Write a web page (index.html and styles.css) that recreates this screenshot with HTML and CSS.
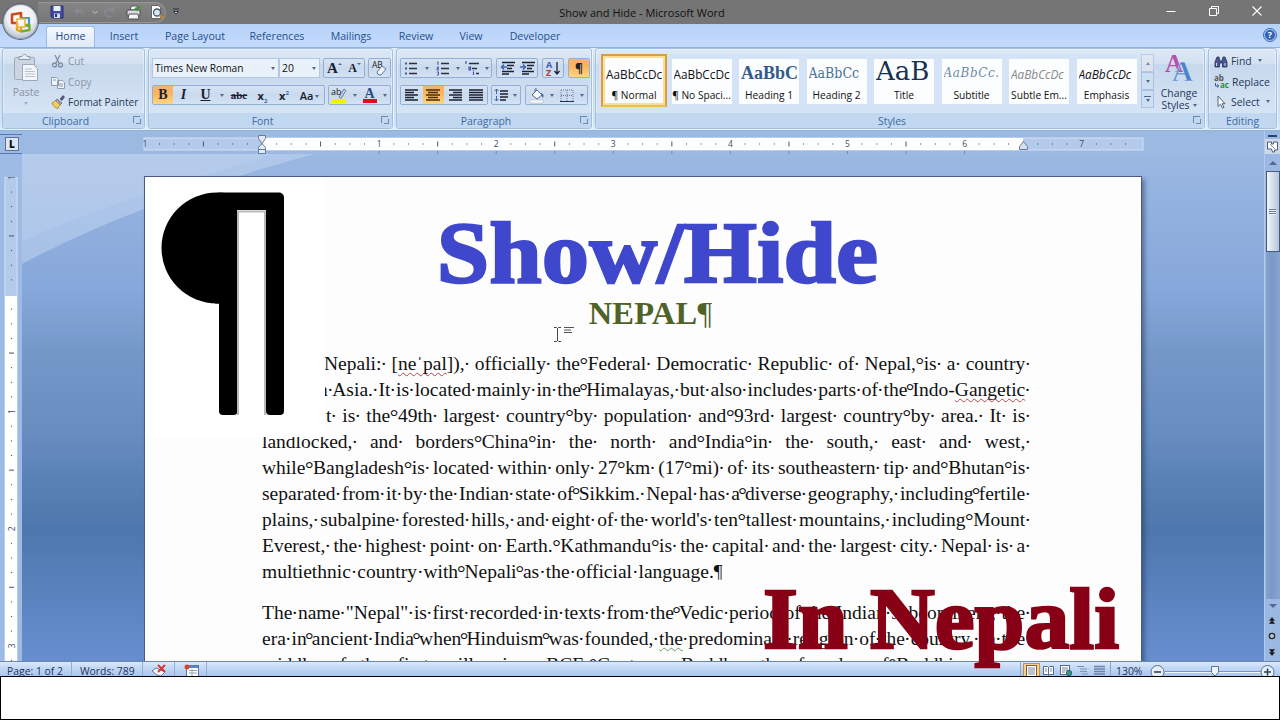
FILE: index.html
```html
<!DOCTYPE html>
<html lang="en">
<head>
    <meta charset="UTF-8">
    <meta name="viewport" content="width=device-width, initial-scale=1.0">
    <title>Show and Hide - Microsoft Word</title>
    <link rel="stylesheet" href="styles.css">
</head>
<body>
    <header class="titlebar">
        <div class="quick-access">
            <svg width="14" height="14" viewBox="0 0 14 14"><path d="M1 1h12v12H2.500L1 11.500z" fill="#3f48a8" stroke="#26306f"/><rect x="3.500" y="1" width="7" height="5" fill="#e9eefb"/><rect x="4" y="8.500" width="6" height="4.500" fill="#cfd7ef"/><rect x="5" y="9" width="2" height="3" fill="#26306f"/></svg>
            <svg class="faded" width="14" height="14" viewBox="0 0 14 14"><path d="M5 2L1 6l4 4V7.500c3-.5 5 .5 6 3 .5-4-2-6.500-6-6z" fill="#8e93a6"/></svg>
            <svg class="tiny" width="6" height="5" viewBox="0 0 6 5"><path d="M.5 1l2.500 2.500L5.500 1" fill="none" stroke="#c6c6c6"/></svg>
            <svg class="faded" width="14" height="14" viewBox="0 0 14 14"><path d="M10 2v4H6M10 6C8 2 2 3 2 8c0 3 4 5 7 3" fill="none" stroke="#8e93a6" stroke-width="2"/></svg>
            <svg width="15" height="15" viewBox="0 0 15 15"><path d="M4 5l1.500-4h6L10 5z" fill="#fff" stroke="#555"/><rect x="1" y="5" width="13" height="6" rx="1" fill="#d8dbe2" stroke="#44474f"/><path d="M3 9h9l1 5H2z" fill="#f4f4f4" stroke="#555"/><path d="M9 3l2 2 3-4" fill="none" stroke="#3b9a35" stroke-width="1.800"/></svg>
            <svg width="14" height="15" viewBox="0 0 14 15"><path d="M1.500.5h7l2 2v11h-9z" fill="#fff" stroke="#666"/><circle cx="7" cy="7.500" r="3.500" fill="#d4e8f8" stroke="#4a5568" stroke-width="1.300"/><path d="M9.500 10l3.500 3.500" stroke="#c28a2b" stroke-width="2.200"/></svg>
        </div>
        <svg class="qat-more" width="8" height="8" viewBox="0 0 8 8"><path d="M1 1h6M1.500 3.500h5L4 6z" fill="#dfe7f3" stroke="#26344c"/></svg>
        <h1 class="window-title">Show and Hide - Microsoft Word</h1>
        <div class="window-buttons">
            <svg width="10" height="10" viewBox="0 0 10 10"><path d="M.5 5.500h9" stroke="#fff"/></svg>
            <svg width="10" height="10" viewBox="0 0 10 10"><path d="M.5 2.500h7v7h-7zM2.500 2.500v-2h7v7h-2" fill="none" stroke="#fff"/></svg>
            <svg width="10" height="10" viewBox="0 0 10 10"><path d="M.5.5l9 9M9.500.5l-9 9" stroke="#fff" stroke-width="1.100"/></svg>
        </div>
    </header>

    <div class="office-button">
        <svg width="24" height="24" viewBox="0 0 24 24" fill="none" stroke-linejoin="round">
            <path d="M8 13H3V4.500L12 3v5" stroke="#cf4a14" stroke-width="2.600"/>
            <path d="M12 8h8v8h-3" stroke="#4f93cf" stroke-width="2.200"/>
            <path d="M8 13v7l4 1.500V17" stroke="#e9a11b" stroke-width="2.400"/>
            <path d="M12 21.500l8.500-1.500v-5H16" stroke="#6fae35" stroke-width="2.400"/>
            <path d="M8 9h8v8H8z" stroke="#f0b42c" stroke-width="1.600"/>
        </svg>
    </div>

    <nav class="tabs">
        <span class="tab active">Home</span>
        <span class="tab">Insert</span>
        <span class="tab">Page Layout</span>
        <span class="tab">References</span>
        <span class="tab">Mailings</span>
        <span class="tab">Review</span>
        <span class="tab">View</span>
        <span class="tab">Developer</span>
        <span class="help">?</span>
    </nav>

    <section class="ribbon">
        <div class="group clipboard">
            <div class="group-body">
                <div class="paste disabled">
                    <svg width="28" height="30" viewBox="0 0 28 30"><rect x="2.500" y="4.500" width="20" height="22" rx="1" fill="#cbd4e0" stroke="#9ba9bc"/><path d="M7 6.500h11v-3h-3C14 .5 11 .5 10 3.500H7z" fill="#e8edf3" stroke="#8b98ab"/><path d="M10.500 11.500h11l4 4v12h-15z" fill="#f3f6fa" stroke="#9ba9bc"/><path d="M13 16h7M13 18.500h10M13 21h10M13 23.500h10" stroke="#b6c1d1"/></svg>
                    <span>Paste</span>
                    <i class="arrow"></i>
                </div>
                <div class="commands">
                    <div class="command disabled"><svg width="14" height="14" viewBox="0 0 14 14" fill="none" stroke="#7f8ea3" stroke-width="1.300"><path d="M4 1l4 8M9 1L5 9"/><circle cx="3.500" cy="11" r="2"/><circle cx="9.500" cy="11" r="2"/></svg>Cut</div>
                    <div class="command disabled"><svg width="14" height="14" viewBox="0 0 14 14" fill="#eef3f9" stroke="#8c9bb1"><path d="M.5 2.500h5l2 2v6h-7zM6.500 5.500h5l2 2v6h-7z"/><path d="M8 9h4M8 11h4M2 5h3"/></svg>Copy</div>
                    <div class="command"><svg width="14" height="14" viewBox="0 0 14 14"><path d="M9 4l3-3.500L13.500 2 11 5.500z" fill="#555d80" stroke="#333a5c" stroke-width=".6"/><path d="M6 4l5 4-2 2-5-4z" fill="#9aa2c5" stroke="#444c70" stroke-width=".6"/><path d="M4.500 5.500L1 8c1 3 3 5 6 5.500L9 9.500z" fill="#f2cd5c" stroke="#9a7521" stroke-width=".7"/></svg>Format Painter</div>
                </div>
            </div>
            <div class="group-label with-launcher">Clipboard<i class="launcher"></i></div>
        </div>

        <div class="group font">
            <div class="group-body rows">
                <div class="row">
                    <div class="combo font-name">Times New Roman<i class="arrow"></i></div>
                    <div class="combo font-size">20<i class="arrow"></i></div>
                    <div class="buttons grow-shrink">
                        <span class="serif big">A<i class="arrow up"></i></span>
                        <span class="serif small">A<i class="arrow"></i></span>
                    </div>
                    <div class="buttons clear"><svg width="17" height="16" viewBox="0 0 17 16"><text x="1" y="8" font-size="8.500" font-family="Open Sans, sans-serif" fill="#222">AB</text><path d="M6 12l5-6 4 3-5 6-3-.5z" fill="#eef2fb" stroke="#68789a"/></svg></div>
                </div>
                <div class="row">
                    <div class="buttons character">
                        <b class="serif on">B</b>
                        <em class="serif">I</em>
                        <u class="serif">U</u>
                        <i class="arrow"></i>
                        <s class="serif">abc</s>
                        <b>x<sub>2</sub></b>
                        <b>x<sup>2</sup></b>
                        <span class="case">Aa<i class="arrow"></i></span>
                    </div>
                    <div class="buttons colours">
                        <svg width="18" height="17" viewBox="0 0 18 17"><text x="1" y="8" font-size="9" font-family="Open Sans, sans-serif" fill="#222">ab</text><path d="M9 10l5-8 2 1.500-5 8z" fill="#c6d3ec" stroke="#4f628a" stroke-width=".8"/><rect x="2" y="12" width="14" height="4" fill="#f6f000"/></svg>
                        <i class="arrow"></i>
                        <svg width="18" height="17" viewBox="0 0 18 17"><text x="3.500" y="11" font-size="14" font-weight="bold" font-family="Liberation Serif, serif" fill="#2f4c86">A</text><rect x="2" y="12" width="14" height="4" fill="#d8121b"/></svg>
                        <i class="arrow"></i>
                    </div>
                </div>
            </div>
            <div class="group-label with-launcher">Font<i class="launcher"></i></div>
        </div>

        <div class="group paragraph">
            <div class="group-body rows">
                <div class="row">
                    <div class="buttons lists">
                        <svg width="14" height="14" viewBox="0 0 14 14"><path d="M5 2.500h8M5 7.500h8M5 12.500h8" stroke="#2a2f3c" stroke-width="1.300"/><path d="M1 1.500h2v2H1zM1 6.500h2v2H1zM1 11.500h2v2H1z" fill="#4057a5"/></svg>
                        <i class="arrow"></i>
                        <svg width="14" height="14" viewBox="0 0 14 14"><path d="M5 2.500h8M5 7.500h8M5 12.500h8" stroke="#2a2f3c" stroke-width="1.300"/><path d="M1 1h1v3M.8 6h1.700v1.500H1V9h2M.8 11h1.700v3H.8" fill="none" stroke="#4057a5"/></svg>
                        <i class="arrow"></i>
                        <svg width="15" height="14" viewBox="0 0 15 14"><path d="M4 2.500h10M7 7.500h5M11 12.500h3" stroke="#2a2f3c" stroke-width="1.300"/><path d="M1 0v3M4 6h1.500v3H4zM8.500 9.500v1M8.500 11v3" fill="none" stroke="#4057a5" stroke-width="1.200"/></svg>
                        <i class="arrow"></i>
                    </div>
                    <div class="buttons indents">
                        <svg width="15" height="14" viewBox="0 0 15 14"><path d="M2 1.500h13M7 4.500h7M7 7.500h5M2 10.500h12M2 13h7" stroke="#1c2130" stroke-width="1.500"/><path d="M7 6H2M4 3.500L1.500 6 4 8.500" stroke="#4361b0" stroke-width="1.500" fill="none"/></svg>
                        <svg width="15" height="14" viewBox="0 0 15 14"><path d="M2 1.500h13M7 4.500h7M7 7.500h5M2 10.500h12M2 13h7" stroke="#1c2130" stroke-width="1.500"/><path d="M0 6h5M3 3.500L5.500 6 3 8.500" stroke="#4361b0" stroke-width="1.500" fill="none"/></svg>
                    </div>
                    <div class="buttons sort"><svg width="16" height="17" viewBox="0 0 16 17"><text x="1" y="8" font-size="9" font-weight="bold" font-family="Open Sans, sans-serif" fill="#3a5fae">A</text><text x="1" y="16" font-size="9" font-weight="bold" font-family="Open Sans, sans-serif" fill="#b5382c">Z</text><path d="M12 2v11M9.500 11l2.500 3 2.500-3" fill="none" stroke="#1c2130" stroke-width="1.300"/></svg></div>
                    <div class="buttons pilcrow"><b class="on">¶</b></div>
                </div>
                <div class="row">
                    <div class="buttons aligns">
                        <svg width="14" height="12" viewBox="0 0 14 12"><path d="M0 1h13M0 3.500h9M0 6h13M0 8.500h9M0 11h13" stroke="#1c2130" stroke-width="1.400"/></svg>
                        <span class="on"><svg width="14" height="12" viewBox="0 0 14 12"><path d="M0 1h14M2 3.500h10M0 6h14M2 8.500h10M0 11h14" stroke="#4a2c05" stroke-width="1.400"/></svg></span>
                        <svg width="14" height="12" viewBox="0 0 14 12"><path d="M1 1h13M5 3.500h9M1 6h13M5 8.500h9M1 11h13" stroke="#1c2130" stroke-width="1.400"/></svg>
                        <svg width="14" height="12" viewBox="0 0 14 12"><path d="M0 1h14M0 3.500h14M0 6h14M0 8.500h14M0 11h14" stroke="#1c2130" stroke-width="1.400"/></svg>
                    </div>
                    <div class="buttons spacing">
                        <svg width="14" height="14" viewBox="0 0 14 14"><path d="M6 3h8M6 6h8M6 9h8M6 12h6" stroke="#1c2130" stroke-width="1.400"/><path d="M2.500 1v5M.5 3l2-2 2 2M2.500 8v5M.5 11l2 2 2-2" stroke="#4361b0" fill="none"/></svg>
                        <i class="arrow"></i>
                    </div>
                    <div class="buttons fills">
                        <svg width="16" height="15" viewBox="0 0 16 15"><path d="M3 7l5-5 5 5-5 4z" fill="#f5f8fc" stroke="#5b6b88"/><path d="M6 4V1h2" stroke="#5b6b88" fill="none"/><path d="M12 5c3 1 3 3 2 5l-2-3z" fill="#3d6bb5"/><rect x="1" y="12" width="13" height="3" fill="#fff" stroke="#a9b3c4" stroke-width=".6"/></svg>
                        <i class="arrow"></i>
                        <svg width="14" height="13" viewBox="0 0 14 13"><path d="M1 1h12M1 6.500h12M1 1v11M7 1v11M13 1v11" stroke="#68789a" stroke-dasharray="1 1"/><path d="M0 12.500h14" stroke="#26304a"/></svg>
                        <i class="arrow"></i>
                    </div>
                </div>
            </div>
            <div class="group-label with-launcher">Paragraph<i class="launcher"></i></div>
        </div>

        <div class="group styles">
            <div class="group-body">
                <div class="gallery">
                    <div class="style selected"><span class="sample">AaBbCcDc</span><span class="name">¶ Normal</span></div>
                    <div class="style"><span class="sample">AaBbCcDc</span><span class="name">¶ No Spaci...</span></div>
                    <div class="style heading1"><span class="sample">AaBbCc</span><span class="name">Heading 1</span></div>
                    <div class="style heading2"><span class="sample">AaBbCc</span><span class="name">Heading 2</span></div>
                    <div class="style title"><span class="sample">AaB</span><span class="name">Title</span></div>
                    <div class="style subtitle"><span class="sample">AaBbCc.</span><span class="name">Subtitle</span></div>
                    <div class="style subtle"><span class="sample">AaBbCcDc</span><span class="name">Subtle Em...</span></div>
                    <div class="style emphasis"><span class="sample">AaBbCcDc</span><span class="name">Emphasis</span></div>
                </div>
                <div class="gallery-scroll">
                    <span class="off"><i class="arrow up"></i></span>
                    <span><i class="arrow"></i></span>
                    <span class="more"><i class="arrow"></i></span>
                </div>
                <div class="change-styles">
                    <svg width="28" height="28" viewBox="0 0 28 28" font-family="Liberation Serif, serif" font-weight="bold"><text x="0" y="18" font-size="25" fill="#b451b0">A</text><text x="7" y="27" font-size="29" fill="#4d82c8" stroke="#d7e6fa" stroke-width=".4">A</text></svg>
                    <span>Change</span>
                    <span>Styles<i class="arrow"></i></span>
                </div>
            </div>
            <div class="group-label with-launcher">Styles<i class="launcher"></i></div>
        </div>

        <div class="group editing">
            <div class="group-body">
                <div class="commands">
                    <div class="command"><svg width="14" height="13" viewBox="0 0 14 13"><path d="M1 12V7l2-5h2l1 4h2l1-4h2l2 5v5H8.500V8h-3v4z" fill="#46598a" stroke="#22315c" stroke-width=".8"/><path d="M2.500 8v3M11 8v3" stroke="#c9d6f0"/></svg>Find<i class="arrow"></i></div>
                    <div class="command"><svg width="15" height="14" viewBox="0 0 15 14" font-family="Open Sans, sans-serif" font-size="8" font-weight="bold"><text x="0" y="6" fill="#555">ab</text><text x="6" y="13" fill="#2c8d3a">ac</text><path d="M1.500 8v3h3M3 9.500L4.800 11 3 12.500" fill="none" stroke="#3458a8"/></svg>Replace</div>
                    <div class="command"><svg width="14" height="14" viewBox="0 0 14 14"><path d="M4 1v10.500l2.500-2.300 2 4 1.500-.8-1.900-3.700H11z" fill="#fff" stroke="#56657f"/></svg>Select<i class="arrow"></i></div>
                </div>
            </div>
            <div class="group-label">Editing</div>
        </div>
    </section>

    <main class="workspace">
        <aside class="left-rail">
            <div class="tab-stop"><span>L</span></div>
            <svg class="v-ruler" id="vRuler" width="22" height="484" viewBox="0 177 22 484"></svg>
        </aside>

        <div class="canvas">
            <svg class="swoosh" width="300" height="120" viewBox="0 0 300 120" preserveAspectRatio="none"><path d="M0 0h292C190 28 90 62 0 110z" fill="#c9dcf5" opacity=".45"/><path d="M0 0h250C160 30 80 50 0 88z" fill="#d4e2f7" opacity=".15"/></svg>
            <svg class="h-ruler" id="hRuler" width="1242" height="23" viewBox="22 131 1242 23"></svg>
            <article class="page">
                <h2 class="doc-title">NEPAL<span>¶</span></h2>
                <div class="paragraph-text">
                    <p class="line from-image">Nepali: [<span class="misspelled">neˈpal</span>]), officially the°Federal Democratic Republic of Nepal,°is a country </p>
                    <p class="line tight from-image second">n Asia. It is located mainly in the°Himalayas, but also includes parts of the°Indo-<span class="misspelled">Gangetic</span> </p>
                    <p class="line from-image third">t is the°49th largest country°by population and°93rd largest country°by area. It is </p>
                    <p class="line">landlocked, and borders°China°in the north and°India°in the south, east and west, </p>
                    <p class="line">while°Bangladesh°is located within only 27°km (17°mi) of its southeastern tip and°Bhutan°is </p>
                    <p class="line tight">separated from it by the Indian state of°Sikkim. Nepal has a°diverse geography, including°fertile </p>
                    <p class="line">plains, subalpine forested hills, and eight of the world's ten°tallest mountains, including°Mount </p>
                    <p class="line">Everest, the highest point on Earth.°Kathmandu°is the capital and the largest city. Nepal is a </p>
                    <p class="line last">multiethnic country with°Nepali°as the official language.¶</p>
                </div>
                <div class="paragraph-text">
                    <p class="line tight">The name "Nepal" is first recorded in texts from the°Vedic period of the Indian subcontinent, the </p>
                    <p class="line tight">era in°ancient India°when°Hinduism°was founded, <span class="misspelled grammar">the</span> predominant religion of the country. In the </p>
                    <p class="line">middle of the first millennium BCE,°Gautama Buddha, the founder of°Buddhism, was </p>
                </div>
                <div class="pilcrow-image">
                    <svg width="180" height="260" viewBox="145 177 180 260">
                        <circle cx="217" cy="248" r="55.500"/>
                        <rect x="215" y="192.500" width="69" height="30" rx="5"/>
                        <rect x="215" y="200" width="22" height="103.500"/>
                        <rect x="219" y="290" width="18.500" height="125" rx="4"/>
                        <rect x="266" y="205" width="18" height="210" rx="4"/>
                        <rect class="slot" x="237" y="210" width="29" height="206"/>
                        <path class="slot-edge" d="M238 415V211.500h27V415"/>
                    </svg>
                </div>
                <div class="caption show-hide">Show/Hide</div>
                <svg class="cursor" width="22" height="18" viewBox="0 0 22 18"><path d="M1 1.500h2.500l1 1 1-1H8M4.500 2v13M1 15.500h2.500l1-1 1 1H8" fill="none" stroke="#444"/><path d="M11 1.500h10M11 4h7M11 6.500h8" stroke="#555"/></svg>
            </article>
        </div>

        <aside class="right-rail">
            <i class="split"></i>
            <svg class="ruler-toggle" width="15" height="15" viewBox="0 0 15 15"><path d="M2.500 3h4v2h2V3h4v8h-3v2h-2l-1-3h-4z" fill="#fff" stroke="#4d5d7c"/><path d="M5 5l6 6" stroke="#8793ab"/></svg>
            <div class="scroll-button"><i class="arrow up"></i></div>
            <div class="track"><div class="thumb"><i></i></div></div>
            <div class="scroll-button down"><i class="arrow"></i></div>
            <svg class="browse" width="15" height="48" viewBox="0 0 15 48"><path d="M4.500 7.500L7 4.500l2.500 3zM4.500 10.500L7 7.500l2.500 3z" fill="#111" stroke="#111" stroke-width=".5"/><circle cx="7" cy="23" r="2.700" fill="#b7c4da" stroke="#222" stroke-width="1.200"/><path d="M4.500 36.500h5L7 39.500zM4.500 39.500h5L7 42.500z" fill="#111" stroke="#111" stroke-width=".5"/></svg>
        </aside>
        <div class="caption in-nepali">In Nepali</div>
    </main>

    <footer class="statusbar">
        <span class="cell pages">Page: 1 of 2</span>
        <span class="cell words">Words: 789</span>
        <span class="cell proof"><svg width="16" height="13" viewBox="0 0 16 13"><path d="M1 7l4-3 9 4-4 4-4-1z" fill="#f5f7fb" stroke="#6a7ca0"/><path d="M7 1l7 7M14 1L7 8" stroke="#d8352c" stroke-width="1.800"/></svg></span>
        <span class="cell macro"><svg width="15" height="13" viewBox="0 0 15 13"><rect x="2.500" y="1.500" width="12" height="11" fill="#fff" stroke="#5a76a8"/><path d="M3 3h11" stroke="#5a86c8" stroke-width="2"/><path d="M5 6.500h8M5 9h8M8 5v7" stroke="#8aa2c9"/><circle cx="3" cy="3" r="2.500" fill="#d8432e"/></svg></span>
        <div class="views">
            <span class="on"><svg width="11" height="11" viewBox="0 0 11 11"><rect x=".5" y=".5" width="10" height="11" fill="#fff" stroke="#6a6250"/><path d="M2 3h7M2 5h7M2 7h7M2 9h7" stroke="#7c8698"/></svg></span>
            <span><svg width="11" height="11" viewBox="0 0 11 11"><path d="M.5 1.500h4l1 1 1-1h4v8h-4l-1 1-1-1h-4zM5.500 2v8" fill="#fff" stroke="#56688c"/><path d="M2 4h2M2 6h2M7 4h2M7 6h2" stroke="#7c8698"/></svg></span>
            <span><svg width="12" height="11" viewBox="0 0 12 11"><rect x=".5" y=".5" width="9" height="9" fill="#fff" stroke="#56688c"/><path d="M2 3h6M2 5h6M2 7h3" stroke="#7c8698"/><circle cx="9" cy="8" r="2.700" fill="#3c9a72" stroke="#2b5f98"/></svg></span>
            <span><svg width="11" height="11" viewBox="0 0 11 11"><path d="M0 1.500h7M3 4h7M3 6.500h7M5 9h6" stroke="#7b93b8" stroke-width="1.200"/></svg></span>
            <span><svg width="11" height="11" viewBox="0 0 11 11"><path d="M0 1.500h11M0 4h11M0 6.500h11M0 9h11" stroke="#6d82a6" stroke-width="1.300"/></svg></span>
        </div>
        <span class="zoom">130%</span>
        <svg class="zoom-slider" width="128" height="15" viewBox="1150 661 128 15"><path d="M1165 670.500h96" stroke="#7a95bf"/><path d="M1165 671.500h96" stroke="#eef5ff"/><circle cx="1157.500" cy="671" r="6.500" fill="#e6effb" stroke="#5d7394"/><path d="M1154 671h7" stroke="#33425e" stroke-width="1.600"/><path d="M1211.500 665.500h7v6l-3.500 3.500-3.500-3.500z" fill="#eaf2fc" stroke="#5d7394"/><circle cx="1267.500" cy="671" r="6.500" fill="#e6effb" stroke="#5d7394"/><path d="M1264 671h7M1267.500 667.500v7" stroke="#33425e" stroke-width="1.600"/></svg>
    </footer>
    <div class="bottom-band"></div>

    <script src="script.js"></script>
</body>
</html>
```
FILE: styles.css
```css
* {
    box-sizing: border-box;
}

body {
    margin: 0;
    width: 1280px;
    height: 720px;
    overflow: hidden;
    display: flex;
    flex-direction: column;
    position: relative;
    font-family: "Open Sans", "Noto Sans", sans-serif;
    font-size: 10.4px;
    color: #1e395b;
    background: #fff;
}

svg {
    display: block;
    flex: none;
    overflow: visible;
}

.serif {
    font-family: "Liberation Serif", serif;
}

.arrow {
    display: inline-block;
    border: 2.5px solid transparent;
    border-top: 3px solid #52688e;
    border-bottom: 0;
}

.arrow.up {
    border-top: 0;
    border-bottom: 3px solid #52688e;
}

/* title bar */
.titlebar {
    height: 24px;
    flex: none;
    display: grid;
    grid-template-columns: 128px 22px 1fr 110px;
    align-items: center;
    background: #757575;
    padding-left: 38px;
}

.quick-access {
    height: 21px;
    display: flex;
    align-items: center;
    gap: 9px;
    padding-left: 12px;
    border: 1px solid #969696;
    border-left: 0;
    border-radius: 0 11px 11px 0;
    background: linear-gradient(#858585, #777);
}

.quick-access .tiny {
    margin: 0 -4px;
}

.faded {
    opacity: .5;
}

.qat-more {
    margin-left: 6px;
}

.window-title {
    margin: 0;
    padding-right: 74px;
    text-align: center;
    font-size: 11px;
    font-weight: 400;
    color: #111;
}

.window-buttons {
    display: flex;
    gap: 33px;
    padding-bottom: 2px;
    margin-left: -4px;
}

.office-button {
    position: absolute;
    left: 3px;
    top: 4px;
    width: 35px;
    height: 35px;
    display: flex;
    align-items: center;
    justify-content: center;
    border-radius: 50%;
    border: 1px solid #8d97a8;
    background: radial-gradient(circle at 50% 35%, #fff 0%, #eceff4 50%, #b9c2d0 80%, #f4f7fb 100%);
    box-shadow: 0 0 0 1px #5f6670;
}

/* tabs */
.tabs {
    height: 23px;
    flex: none;
    display: grid;
    grid-template-columns: 49px 58px 84px 80px 68px 62px 48px 80px 1fr;
    padding: 2px 4px 0 46px;
    background: linear-gradient(#b7d2f8, #c3dbfd);
    color: #27508c;
    font-size: 10.6px;
}

.tab {
    text-align: center;
    line-height: 21px;
}

.tab.active {
    border: 1px solid #9cbbe6;
    border-bottom: 0;
    border-radius: 3px 3px 0 0;
    line-height: 19px;
    color: #1e4680;
    background: linear-gradient(#f4f9ff, #dfeaf8);
}

.help {
    justify-self: end;
    width: 12px;
    height: 12px;
    margin-top: 3px;
    border-radius: 50%;
    border: 1px solid #a9c8ef;
    outline: 1px solid #3f68b0;
    background: #3163b6;
    color: #fff;
    font-size: 9px;
    font-weight: 700;
    line-height: 10px;
    text-align: center;
}

/* ribbon */
.ribbon {
    height: 84px;
    flex: none;
    display: grid;
    grid-template-columns: 143px 245px 196px 610px 69px;
    gap: 3px;
    padding: 0 0 2px 2px;
    border-top: 1px solid #8fb2e0;
    border-bottom: 1px solid #8fb4d8;
    background: linear-gradient(#e3eefa, #c9dcf3 20%, #cfe3f6 90%, #d2f0fb);
}

.group {
    display: flex;
    flex-direction: column;
    min-width: 0;
    border: 1px solid #a5bfdf;
    border-radius: 3px;
    box-shadow: inset 0 0 0 1px rgba(255, 255, 255, .35), 1px 1px 0 #e8f3fd;
    background: linear-gradient(#dde8f5, #d4e1f1 18%, #c7d8ec 20%, #dae8f7);
}

.group-body {
    height: 64px;
    display: flex;
}

.group-body.rows {
    flex-direction: column;
    gap: 7px;
    padding: 9px 0 0 3px;
}

.group-label {
    flex: 1;
    display: flex;
    justify-content: center;
    align-items: center;
    position: relative;
    padding-top: 1px;
    border-radius: 0 0 2px 2px;
    background: #c2d8f1;
    color: #3d69a6;
}

.group-label.with-launcher {
    padding-right: 16px;
}

.launcher {
    position: absolute;
    right: 4px;
    top: 3px;
    width: 7px;
    height: 7px;
    border-left: 1px solid #6f88b0;
    border-top: 1px solid #6f88b0;
}

.launcher::after {
    content: "";
    position: absolute;
    left: 2px;
    top: 2px;
    width: 4px;
    height: 4px;
    border-right: 1.5px solid #6f88b0;
    border-bottom: 1.5px solid #6f88b0;
}

.disabled {
    color: #8b94a3;
}

.paste {
    width: 46px;
    display: flex;
    flex-direction: column;
    align-items: center;
    padding-top: 4px;
    line-height: 19px;
}

.paste .arrow {
    opacity: .4;
}

.commands {
    display: flex;
    flex-direction: column;
    padding: 2px 0 0 2px;
}

.command {
    display: flex;
    align-items: center;
    gap: 3px;
    height: 20.5px;
    white-space: nowrap;
}

.clipboard .command {
    font-size: 10.1px;
}

.row {
    display: flex;
    gap: 3px;
    height: 20px;
}

.combo {
    display: flex;
    align-items: center;
    justify-content: space-between;
    border: 1px solid #b2c8e6;
    padding: 0 3px 0 2px;
    background: #e9f1fb;
    color: #111;
    white-space: nowrap;
}

.font-name {
    width: 127px;
    font-size: 10.2px;
}

.font-size {
    width: 41px;
    margin-left: -3px;
}

.buttons {
    display: grid;
    align-items: center;
    justify-items: center;
    border: 1px solid #93afd6;
    border-radius: 2px;
    background: linear-gradient(#d6e3f3, #c9daee 50%, #d3e2f4);
    color: #1c2130;
}

.buttons .on {
    align-self: stretch;
    justify-self: stretch;
    display: flex;
    align-items: center;
    justify-content: center;
    background: linear-gradient(#f4b471, #fbb45c 40%, #fdd67f);
}

.grow-shrink { width: 42px; grid-template-columns: 21px 19px; }
.clear { width: 23px; }
.character { width: 173px; grid-template-columns: 20px 21px 23px 9px 26px 21px 22px 29px; font-size: 11px; }
.colours { width: 63px; grid-template-columns: 20px 11px 20px 10px; }
.lists { width: 92px; grid-template-columns: 20px 11px 21px 10px 19px 9px; margin-right: 1px; }
.indents { width: 42px; grid-template-columns: 20px 20px; margin-right: 1px; }
.sort { width: 22px; margin-right: 1px; }
.pilcrow { width: 22px; }
.aligns { width: 88px; grid-template-columns: repeat(4, 21.5px); }
.spacing { width: 30px; grid-template-columns: 18px 9px; }
.fills { width: 63px; grid-template-columns: 21px 10px 20px 10px; margin-left: 1px; }

.grow-shrink span {
    display: flex;
    align-items: flex-start;
    font-weight: 700;
    line-height: 18px;
}

.grow-shrink .arrow {
    margin-top: 4px;
    border-width: 0 2px 2.5px;
}

.grow-shrink .small .arrow {
    border-width: 2.5px 2px 0;
}

.grow-shrink .big { font-size: 15px; }
.grow-shrink .small { font-size: 12px; }

.character b.serif,
.character em,
.character u {
    font-size: 14px;
    font-weight: 700;
}

.character s {
    font-weight: 700;
}

.character sub,
.character sup {
    font-size: 6px;
    line-height: 0;
    color: #3a5fae;
}

.case {
    font-weight: 600;
    white-space: nowrap;
}

.case .arrow {
    margin: 0 0 2px 2px;
}

.pilcrow b {
    font-size: 12px;
}

/* styles gallery */
.gallery {
    display: grid;
    grid-template-columns: repeat(8, 67.5px);
    align-items: start;
    margin: 5px 0 3px 3px;
    padding-left: 2px;
    background: #d4e4f6;
}

.style {
    width: 66px;
    height: 53px;
    border: 3px solid transparent;
    border-top-width: 5px;
    display: flex;
    flex-direction: column;
    align-items: center;
    background: #fcfdff;
    background-clip: padding-box;
    color: #111;
    overflow: hidden;
    white-space: nowrap;
}

.style.selected {
    border: 2px solid #dd9a3f;
    border-bottom-color: #e9c04b;
    box-shadow: inset 0 0 0 2px #fbdf94;
    padding-top: 3px;
}

.sample {
    height: 29px;
    line-height: 30px;
    width: 56px;
    overflow: hidden;
    font-size: 11.8px;
}

.name {
    line-height: 15px;
    font-size: 10.2px;
}

.heading1 .sample {
    font: 700 18px/29px "Liberation Serif", serif;
    color: #345a8a;
}

.heading2 .sample {
    font: 14px/29px "DejaVu Serif", serif;
    font-stretch: condensed;
    color: #4d7393;
}

.title .sample {
    font: 26px/25px "DejaVu Serif", serif;
    color: #17304f;
}

.subtitle .sample {
    font: italic 12px/29px "DejaVu Serif", serif;
    letter-spacing: .6px;
    color: #6d8ba5;
}

.subtle .sample {
    font-style: italic;
    color: #8a8a8a;
}

.emphasis .sample {
    font-style: italic;
}

.gallery-scroll {
    display: grid;
    grid-template-rows: repeat(3, 18px);
    width: 13px;
    margin-top: 5px;
}

.gallery-scroll span {
    display: flex;
    flex-direction: column;
    align-items: center;
    justify-content: center;
    border: 1px solid #a9c2e4;
    background: #cfdff2;
}

.gallery-scroll .off {
    background: #e5e8ee;
    opacity: .7;
}

.gallery-scroll .more::before {
    content: "";
    width: 7px;
    height: 1px;
    margin-bottom: 2px;
    background: #52688e;
}

.change-styles {
    width: 50px;
    display: flex;
    flex-direction: column;
    align-items: center;
    padding-top: 5px;
    line-height: 12px;
    white-space: nowrap;
}

.change-styles svg {
    margin-bottom: 5px;
}

.change-styles .arrow,
.editing .arrow {
    margin: 0 0 2px 3px;
}

.editing .commands {
    padding-left: 5px;
}

/* workspace */
.workspace {
    flex: 1;
    display: grid;
    grid-template-columns: 22px 1fr 16px;
    position: relative;
    min-height: 0;
    background: linear-gradient(#9ebbe3 0, #96b4e0 10%, #86a7da 30%, #7398c8 42%, #688dc1 56%, #4e77ad 75%, #5a82bd 87%, #678fd0 100%);
}

.left-rail {
    background: #9dbbe4;
}

.tab-stop {
    width: 23px;
    height: 20px;
    margin-top: 3px;
    padding: 2px 0 0 5px;
    border: 1px solid #5577b4;
    border-left: 0;
}

.tab-stop span {
    display: block;
    width: 14px;
    height: 14px;
    border: 1px solid #5c6f94;
    background: #dbe7f6;
    font-size: 10px;
    font-weight: 800;
    line-height: 12px;
    text-align: center;
    color: #111;
}

.v-ruler {
    margin-top: 23px;
    overflow: hidden;
}

.canvas {
    position: relative;
    overflow: hidden;
}

.swoosh {
    position: absolute;
    left: 0;
    top: 23px;
}

.h-ruler {
    background: #9cb9e2;
}

.ruler-number {
    font-family: "Open Sans", sans-serif;
    font-size: 8.5px;
    fill: #3b4a66;
    text-anchor: middle;
}

.page {
    position: relative;
    width: 998px;
    height: 600px;
    margin: 22px 0 0 122px;
    padding: 0 112px 0 117px;
    border: 1px solid #4a5c80;
    box-shadow: 3px 3px 4px rgba(30, 50, 90, .45);
    background: #fdfdfd;
    font-family: "Liberation Serif", serif;
    color: #111;
}

.doc-title {
    margin: 116px 0 0 10px;
    height: 58px;
    line-height: 40px;
    text-align: center;
    font-size: 32.5px;
    letter-spacing: .2px;
    color: #4f6228;
}

.doc-title span {
    font-weight: 400;
}

.paragraph-text {
    font-size: 19.5px;
    line-height: 25.93px;
    margin-bottom: 15.5px;
}

.line {
    margin: 0;
    width: 768px;
    white-space: nowrap;
    text-align: justify;
    text-align-last: justify;
    word-spacing: -.25em;
}

.line.from-image {
    width: 706px;
    margin-left: 62px;
}

.line.second {
    width: 712px;
    margin-left: 56px;
}

.line.third {
    width: 704px;
    margin-left: 64px;
}

.line.last {
    text-align-last: left;
}

.dot {
    font-style: normal;
    margin: 0 -.045em;
}

.nbsp {
    font-style: normal;
    font-size: 1.1em;
    line-height: 0;
    vertical-align: -2px;
    margin: 0 -.02em;
}

.tight .nbsp {
    margin: 0 -.08em;
}

.last .nbsp {
    margin: 0 -.05em;
}

.last .dot {
    margin: 0;
}

.misspelled {
    text-decoration: underline wavy #b5464f 1px;
    text-underline-offset: 2px;
    text-decoration-skip-ink: none;
}

.misspelled.grammar {
    text-decoration-color: #6d9a6d;
}

.pilcrow-image {
    position: absolute;
    left: 0;
    top: 0;
    background: #fff;
}

.slot {
    fill: #fff;
}

.slot-edge {
    fill: none;
    stroke: #b9b9b9;
    stroke-width: 2;
}

.cursor {
    position: absolute;
    left: 408px;
    top: 149px;
}

.caption {
    position: absolute;
    white-space: nowrap;
    font-family: "Liberation Serif", serif;
    font-size: 87px;
    font-weight: 700;
    line-height: 1;
    -webkit-text-stroke: 2.5px currentColor;
    transform-origin: 0 0;
}

.show-hide {
    left: 292px;
    top: 32px;
    letter-spacing: .5px;
    transform: scaleX(1.075);
    color: #3f48cc;
}

.in-nepali {
    left: 763px;
    top: 444px;
    transform: scaleX(1.03);
    color: #880015;
    z-index: 2;
}

/* scroll bar */
.right-rail {
    display: flex;
    flex-direction: column;
    align-items: center;
    background: #9bb8e2;
    border-left: 1px solid #b4cbec;
}

.split {
    width: 9px;
    height: 2px;
    margin: 4px 0 2px;
    background: #2b4270;
}

.ruler-toggle {
    background: #cdd9e9;
}

.scroll-button {
    height: 17px;
    display: flex;
    align-items: center;
}

.scroll-button.down {
    height: 14px;
}

.scroll-button .arrow {
    border-width: 4px;
    border-top-width: 0;
}

.scroll-button.down .arrow {
    border-top-width: 4px;
    border-bottom-width: 0;
}

.track {
    flex: 1;
    width: 14px;
    background: linear-gradient(90deg, #86a3cf, #7898c8 40%, #87a5d2);
}

.thumb {
    height: 81px;
    border: 1px solid #44597f;
    display: flex;
    align-items: center;
    justify-content: center;
    background: linear-gradient(90deg, #f2f6fb, #d8e2ee 40%, #b6c6da);
}

.thumb i {
    width: 7px;
    height: 6px;
    background: repeating-linear-gradient(#6b7d9b 0 1px, #eef3f9 1px 2px);
}

/* status bar */
.statusbar {
    height: 15px;
    flex: none;
    display: flex;
    position: relative;
    overflow: hidden;
    border-top: 1px solid #6a87b4;
    background: linear-gradient(#dbe9fb, #c4d9f5 40%, #a9c6ef);
    line-height: 18px;
    padding-left: 7px;
    color: #1d3460;
}

.cell {
    border-right: 1px solid #92afd8;
    white-space: nowrap;
}

.pages { width: 65px; }
.words { width: 71px; padding-left: 8px; }
.proof { width: 32px; padding: 2px 0 0 8px; }
.macro { width: 32px; padding: 2px 0 0 9px; }

.views {
    display: grid;
    grid-template-columns: repeat(5, 17px);
    width: 91px;
    margin-left: 813px;
    padding: 1px 2px;
    border-left: 1px solid #86a4d0;
    border-right: 1px solid #86a4d0;
}

.views span {
    padding: 2px 0 0 3px;
}

.views .on {
    background: #fbd084;
    border: 1px solid #c2904a;
    padding: 1px 0 0 2px;
}

.zoom {
    width: 34px;
    margin-left: 5px;
}

.bottom-band {
    height: 44px;
    flex: none;
    border: 1px solid #000;
    background: #fff;
}
```
FILE: script.js
```js
const INCH = 117.1;

// ruler ticks: a number every inch, a bar every half inch, dots in between
function tick(n, pos, vertical) {
    const at = (x, y) => vertical ? [y, x] : [x, y];
    if (n % 8 === 0) {
        const label = Math.abs(n / 8);
        if (label === 0) return '';
        const spot = vertical
            ? `transform="translate(14.500 ${pos}) rotate(-90)"`
            : `x="${pos}" y="147"`;
        return `<text class="ruler-number" ${spot}>${label}</text>`;
    }
    const mid = vertical ? 11.5 : 144;
    const half = n % 4 === 0 ? 2.5 : 0.6;
    const [x1, y1] = at(pos, mid - half);
    const [x2, y2] = at(pos, mid + half);
    return `<path d="M${x1} ${y1}L${x2} ${y2}" stroke="#44546f"/>`;
}

function drawHorizontal() {
    let out = '<rect x="144" y="138" width="999" height="12" fill="#b3caeb" stroke="#d3e2f5"/>';
    out += '<rect x="262" y="138" width="761" height="12" fill="#fff"/>';
    for (let n = -8; n <= 59; n++) {
        out += tick(n, 262 + n * INCH / 8, false);
    }
    for (let n = 2; n <= 12; n++) {
        const x = 262 + n * INCH / 2;
        out += `<path d="M${x} 151v3" stroke="#6f8cb8"/>`;
    }
    out += '<path d="M258.500 135.500h7v3l-3.500 5 3.500 4v6h-7v-6l3.500-4-3.500-5zM258.500 149.500h7" fill="#e3ebf6" stroke="#6a7b99"/>';
    out += '<path d="M1019.500 149.500v-3l4-5 4 5v3z" fill="#d5e0ef" stroke="#6a7b99"/>';
    document.getElementById('hRuler').innerHTML = out;
}

function drawVertical() {
    let out = '<rect x="5" y="177" width="12" height="484" fill="#b3caeb" stroke="#d3e2f5"/>';
    out += '<rect x="5" y="296" width="12" height="365" fill="#fff"/>';
    for (let n = -8; n <= 25; n++) {
        out += tick(n, 294.5 + n * INCH / 8, true);
    }
    document.getElementById('vRuler').innerHTML = out;
}

// formatting marks: a dot for each space, a ring for each non-breaking one
function showMarks(node) {
    if (node.nodeType !== Node.TEXT_NODE) {
        [...node.childNodes].forEach(showMarks);
        return;
    }
    const span = document.createElement('span');
    span.innerHTML = node.textContent.replace(/[ °]/g, ch =>
        ch === ' ' ? '<i class="dot">·</i> ' : '<i class="nbsp">°</i>');
    node.replaceWith(span);
}

drawHorizontal();
drawVertical();
document.querySelectorAll('.line').forEach(showMarks);
```
